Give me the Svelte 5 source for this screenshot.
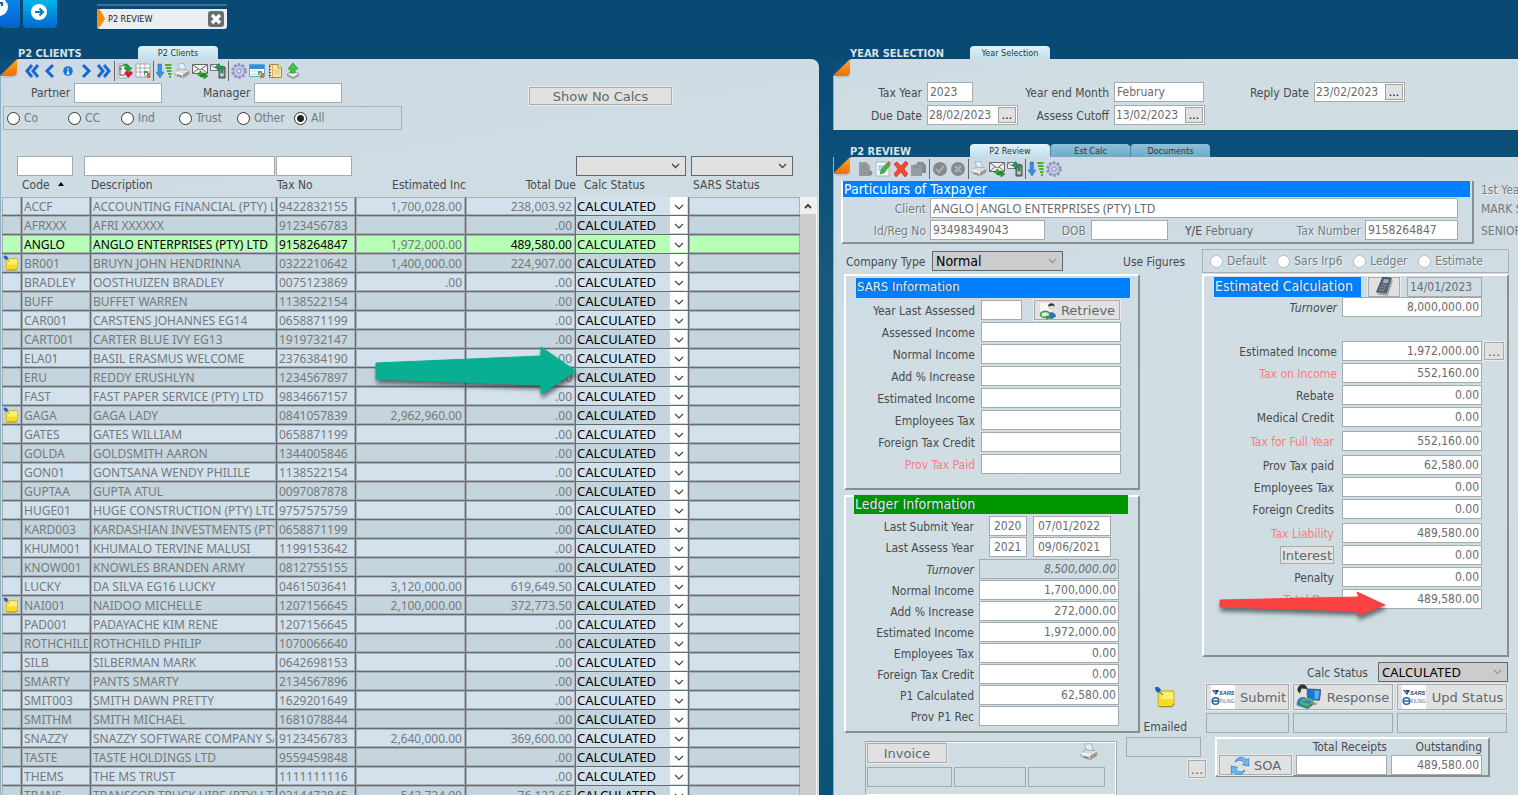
<script>
  const rows = [
    ['ACCF', 'ACCOUNTING FINANCIAL (PTY) LTD', '9422832155', '1,700,028.00', '238,003.92'],
    ['AFRXXX', 'AFRI XXXXXX', '9123456783', '', '.00'],
    ['ANGLO', 'ANGLO ENTERPRISES (PTY) LTD', '9158264847', '1,972,000.00', '489,580.00'],
    ['BR001', 'BRUYN JOHN HENDRINNA', '0322210642', '1,400,000.00', '224,907.00', true],
    ['BRADLEY', 'OOSTHUIZEN BRADLEY', '0075123869', '.00', '.00'],
    ['BUFF', 'BUFFET WARREN', '1138522154', '', '.00'],
    ['CAR001', 'CARSTENS JOHANNES EG14', '0658871199', '', '.00'],
    ['CART001', 'CARTER BLUE IVY EG13', '1919732147', '', '.00'],
    ['ELA01', 'BASIL ERASMUS WELCOME', '2376384190', '', '.00'],
    ['ERU', 'REDDY ERUSHLYN', '1234567897', '', '.00'],
    ['FAST', 'FAST PAPER SERVICE (PTY) LTD', '9834667157', '', '.00'],
    ['GAGA', 'GAGA LADY', '0841057839', '2,962,960.00', '.00', true],
    ['GATES', 'GATES WILLIAM', '0658871199', '', '.00'],
    ['GOLDA', 'GOLDSMITH AARON', '1344005846', '', '.00'],
    ['GON01', 'GONTSANA WENDY PHILILE', '1138522154', '', '.00'],
    ['GUPTAA', 'GUPTA ATUL', '0097087878', '', '.00'],
    ['HUGE01', 'HUGE CONSTRUCTION (PTY) LTD', '9757575759', '', '.00'],
    ['KARD003', 'KARDASHIAN INVESTMENTS (PTY)', '0658871199', '', '.00'],
    ['KHUM001', 'KHUMALO TERVINE MALUSI', '1199153642', '', '.00'],
    ['KNOW001', 'KNOWLES BRANDEN ARMY', '0812755155', '', '.00'],
    ['LUCKY', 'DA SILVA EG16 LUCKY', '0461503641', '3,120,000.00', '619,649.50'],
    ['NAI001', 'NAIDOO MICHELLE', '1207156645', '2,100,000.00', '372,773.50', true],
    ['PAD001', 'PADAYACHE KIM RENE', '1207156645', '', '.00'],
    ['ROTHCHILD', 'ROTHCHILD PHILIP', '1070066640', '', '.00'],
    ['SILB', 'SILBERMAN MARK', '0642698153', '', '.00'],
    ['SMARTY', 'PANTS SMARTY', '2134567896', '', '.00'],
    ['SMIT003', 'SMITH DAWN PRETTY', '1629201649', '', '.00'],
    ['SMITHM', 'SMITH MICHAEL', '1681078844', '', '.00'],
    ['SNAZZY', 'SNAZZY SOFTWARE COMPANY SA', '9123456783', '2,640,000.00', '369,600.00'],
    ['TASTE', 'TASTE HOLDINGS LTD', '9559459848', '', '.00'],
    ['THEMS', 'THE MS TRUST', '1111111116', '', '.00'],
    ['TRANS', 'TRANSCOR TRUCK HIRE (PTY) LTD', '9314472845', '542,724.00', '76,122.65'],
  ];
  const kinds = [['Co', 61], ['CC', 53], ['Ind', 58], ['Trust', 58], ['Other', 57], ['All', 50]];
  const sars = ['Assessed Income', 'Normal Income', 'Add % Increase', 'Estimated Income', 'Employees Tax', 'Foreign Tax Credit', 'Prov Tax Paid'];
  const ledger = [
    ['Normal Income', '1,700,000.00'],
    ['Add % Increase', '272,000.00'],
    ['Estimated Income', '1,972,000.00'],
    ['Employees Tax', '0.00'],
    ['Foreign Tax Credit', '0.00'],
    ['P1 Calculated', '62,580.00'],
    ['Prov P1 Rec', ''],
  ];
  const estimate = [
    ['Estimated Income', '1,972,000.00', 'wide'],
    ['Tax on Income', '552,160.00', 'wide red'],
    ['Rebate', '0.00', ''],
    ['Medical Credit', '0.00', ''],
    ['Tax for Full Year', '552,160.00', 'red apart'],
    ['Prov Tax paid', '62,580.00', 'apart'],
    ['Employees Tax', '0.00', ''],
    ['Foreign Credits', '0.00', ''],
    ['Tax Liability', '489,580.00', 'red apart'],
    ['Interest', '0.00', 'button'],
    ['Penalty', '0.00', ''],
    ['Total Due', '489,580.00', 'red'],
  ];
  const leftTools = ['first', 'prev', 'info', 'next', 'last', '|', 'export', 'grid', '|', 'sort', 'print', 'mail', 'phone', '|', 'gear', 'form', 'note', 'upload'];
  const rightTools = ['new', 'edit', 'delete', 'copy', '|', 'ok', 'cancel', '|', 'print', 'mail', 'phone', '|', 'sort', 'gear'];
</script>

{#snippet icon(name, size = 16)}
  <svg class="icon" width={size} height={size} viewBox="0 0 16 16" aria-hidden="true">
    {#if name === 'first'}
      <path d="M8 2 3 8l5 6M14 2 9 8l5 6" fill="none" stroke="#1768d2" stroke-width="3" />
    {:else if name === 'prev'}
      <path d="M11 2 5 8l6 6" fill="none" stroke="#1768d2" stroke-width="3" />
    {:else if name === 'info'}
      <circle cx="8" cy="8" r="4.8" fill="#1675dc" /><path d="M8 5v1.500M8 7.500v4M6.600 10.500h2.800" stroke="#fff" stroke-width="1.300" />
    {:else if name === 'next'}
      <path d="m5 2 6 6-6 6" fill="none" stroke="#1768d2" stroke-width="3" />
    {:else if name === 'last'}
      <path d="m2 2 5 6-5 6M8 2l5 6-5 6" fill="none" stroke="#1768d2" stroke-width="3" />
    {:else if name === 'export'}
      <path d="M1 1h9v14H1z" fill="#f3f3f3" stroke="#aaa" /><path d="M3 4v9M3 12h5" stroke="#888" stroke-width="1.500" /><path d="M2 3h3M2 6h3" stroke="#555" />
      <path d="M5 3c3-3 7-2 8 2h2l-4 4-4-4h2c-.5-2-2-3-4-2z" fill="#28a428" stroke="#116b15" stroke-width=".6" /><path d="M7.500 10c.5-2.500 3-2 4-.5 1-1.500 3.500-2 4 .5 0 2-2.500 2.500-4 5-1.500-2.500-4-3-4-5z" fill="#d51440" />
    {:else if name === 'grid'}
      <path d="M1 1h14v13H1z" fill="#fff" stroke="#a4a4ac" /><path d="M1 5h14M1 9h14M5 1v13M10 1v13" stroke="#aaa" />
      <path d="M9 8h4v4H9z" fill="#2ba84a" /><path d="M11 10h4v5h-3z" fill="#e85b43" /><path d="M10 10h2v2h-2z" fill="#fff" />
    {:else if name === 'sort'}
      <path d="M2 1h3.500v8H8l-4 6-4-6h2z" fill="#3c8ee0" stroke="#1c67b8" stroke-width=".5" />
      <path d="M9 2h6.500M10 5h5.500M11 8h4.500M12 11h3.500M13 14h2" stroke="#4fae2d" stroke-width="2" />
    {:else if name === 'print'}
      <path d="m4 1 6-.5L12 7 6 8z" fill="#dceeff" stroke="#90a9c5" stroke-width=".7" />
      <path d="m1 9 4-3 10 1v4l-6 4-8-3z" fill="#dcdcda" stroke="#9b9b9b" stroke-width=".7" /><path d="m1 9 8 2 6-4" fill="none" stroke="#fff" /><path d="m9 11 6-3.500v4L9 15z" fill="#9c9c9a" /><path d="m3 12 5 1.500" stroke="#666" />
    {:else if name === 'mail'}
      <path d="M.5 1.500h15v9H.5z" fill="#eef1ee" stroke="#666" /><path d="m1 2 7 5 7-5M1 10l5-4M15 10l-5-4" fill="none" stroke="#666" />
      <path d="m5 11 4-3v2h3v2H9v2z" fill="#38af35" stroke="#17681a" stroke-width=".6" /><path d="m16 13-4-3v2H9v2h3v2z" fill="#249b28" stroke="#17681a" stroke-width=".5" />
    {:else if name === 'phone'}
      <path d="M.5 1.500h9v6h-9z" fill="#f3f3f3" stroke="#777" /><path d="m1 2 4 3 4-3" fill="none" stroke="#777" />
      <path d="M9 4h6v11H9z" fill="#8a8d8c" stroke="#454848" /><path d="M10.500 7h3v6h-3z" fill="#cfd5d3" /><path d="m5 4 4-3.500V3h4v7h-2V5.500H9V8z" fill="#20a05a" stroke="#11683a" stroke-width=".5" />
    {:else if name === 'gear'}
      <circle cx="8" cy="8" r="6.500" fill="none" stroke="#8a8ec0" stroke-width="2.500" stroke-dasharray="2.500 1.600" /><circle cx="8" cy="8" r="5.500" fill="#c9cbe6" stroke="#8f93c2" /><circle cx="8" cy="8" r="2.200" fill="#e3e8f1" stroke="#8084b7" />
    {:else if name === 'form'}
      <path d="M.5 1.500h15v12H.5z" fill="#fff" stroke="#5aa5dc" /><path d="M1 2h14v4H1z" fill="#348de0" /><path d="M2 8h6M2 11h6" stroke="#a9cde8" /><path d="M9 8h4v4H9z" fill="#3bad4a" /><path d="M11 10h4v5h-4z" fill="#ed654a" /><path d="M10.500 10h1.500v1.500h-1.500z" fill="#fff" />
    {:else if name === 'note'}
      <path d="M2.500 1.500H11L14.500 5v9.500h-12z" fill="#fbeaa0" stroke="#a08640" /><path d="M11 1.500V5h3.500" fill="#fff" stroke="#a08640" /><path d="M5.500 2v12" stroke="#e8a070" /><path d="M7 7h6M7 9h6M7 11h6" stroke="#dcc984" /><path d="M2 3.500h2M2 6.500h2M2 9.500h2M2 12.500h2" stroke="#555" />
    {:else if name === 'upload'}
      <path d="m2 11 6-3 6 3-6 4z" fill="#eee" stroke="#888" stroke-width=".7" /><path d="m2 11 6 3v2l-6-3zm12 0-6 3v2l6-3z" fill="#999" /><path d="M8 0 3 6h3l-1 4h5V6h3z" fill="#43c53f" stroke="#1f8a24" stroke-width=".7" />
    {:else if name === 'new'}
      <path d="M2 1h7l4 4v10H2z" fill="#969b9e" /><path d="M4 6h6M4 9h6M4 12h5" stroke="#858a8d" /><circle cx="13" cy="12" r="2.500" fill="#8c9194" />
    {:else if name === 'edit'}
      <path d="M1 1h10l3 3v11H1z" fill="#f6fafc" stroke="#a3b3bd" /><path d="M3 5h7M3 7h7M3 9h4" stroke="#78a8cf" /><path d="m5 13 1-4 6-7 3 2-6 8z" fill="#45b542" stroke="#25822b" stroke-width=".6" /><path d="m12 2 1.500-2L16 2l-1 2z" fill="#df5a4a" />
    {:else if name === 'delete'}
      <path d="m1 3 3-2 4 4 5-5 2 3-4 5 4 5-3 3-4-5-5 5-2-3 4-5z" fill="#ef4a30" stroke="#c32413" stroke-width=".6" />
    {:else if name === 'copy'}
      <path d="M6 1h6l3 3v8H6z" fill="#858b8e" /><path d="M0 4h3l1-1h2l1 1h4v11H0z" fill="#959b9e" /><path d="M2 6h6" stroke="#7c8285" />
    {:else if name === 'ok'}
      <circle cx="8" cy="8" r="7" fill="#85898c" /><path d="m4 8 3 3 5-6" fill="none" stroke="#a8aeb1" stroke-width="2.200" />
    {:else if name === 'cancel'}
      <circle cx="8" cy="8" r="7" fill="#85898c" /><path d="m5 5 6 6M11 5l-6 6" stroke="#a8aeb1" stroke-width="2.400" />
    {:else if name === 'sticky'}
      <path d="M3 3.500h11.500V13l-2 2H3z" fill="#f7dc26" stroke="#c4a42a" stroke-width=".6" /><path d="M5 4.500h9v5H5z" fill="#fdf07a" /><path d="M4 15h9l2-2" fill="none" stroke="#a88b2c" stroke-width=".8" /><path d="m.5 1 2.500-.5 2 2-1 2.500-2.500-1z" fill="#1c5fc7" /><path d="m4 4 2.500 2.500" stroke="#7a8da5" />
    {:else if name === 'person'}
      <path d="M1 1h10v11H1z" fill="#f6f8fa" /><circle cx="11" cy="4.500" r="2.800" fill="#e5d6c8" /><path d="M8 4c0-4 6-4 6 0l-2-1z" fill="#29343a" />
      <path d="M7 14c0-7 8-6 8-1l-4 2z" fill="#2878ae" /><ellipse cx="5.500" cy="11" rx="4" ry="2.700" fill="#dfeee5" stroke="#3f9c4c" stroke-width="1.500" /><path d="m6 12 4 1-3 3z" fill="#348f42" />
    {:else if name === 'response'}
      <path d="m7 3 9 .5-1 6.500-7-.5z" fill="#1977d8" stroke="#4c5f70" stroke-width=".6" /><path d="m12 4 3 .3-.8 5-2-.2z" fill="#52b4f2" /><path d="m9 11 5 .5-1 1.500-5-.5z" fill="#9eaab0" />
      <path d="M1 13c0-5 4-6 7-4l4 3-4 3.500z" fill="#2f86a8" /><circle cx="4.500" cy="4.500" r="2.800" fill="#eadfd6" /><path d="M1.500 4c0-5 6-4.500 6-1L4 2.800 3 6z" fill="#29343a" />
      <ellipse cx="7.500" cy="11" rx="3.500" ry="1.700" fill="none" stroke="#5fb06c" stroke-width="1.400" /><path d="m9 12 2 .5-2 2z" fill="#348f42" />
    {:else if name === 'calc'}
      <path d="m7 0 7 1-4 12-8-1z" fill="#56616d" stroke="#39424a" stroke-width=".6" /><path d="m8 1.500 4 .5-1 3-4-.5z" fill="#91b5cf" /><path d="m6 6 4 1M5 8l4 1M4 10l4 1" stroke="#8fa6bb" stroke-dasharray="1 .6" /><path d="m14 1-4 12-8-1 1 2 8 1 4-12z" fill="#9aa1a5" />
    {:else if name === 'refresh'}
      <path d="M4 5c2-5 6-5 9-2l2-1v6l-5-1 1.500-1.500C9 2.500 6 3 4 5z" fill="#6bb8f5" stroke="#287bcb" stroke-width=".6" /><path d="M12 11c-2 5-6 5-9 2l-2 1V8l5 1-1.500 1.500C7 13.500 10 13 12 11z" fill="#6bb8f5" stroke="#287bcb" stroke-width=".6" />
    {:else if name === 'close'}
      <rect width="16" height="16" rx="3" fill="#686d70" /><path d="m4 4 8 8M12 4l-8 8" stroke="#fff" stroke-width="3.200" />
    {/if}
  </svg>
{/snippet}

{#snippet toolbar(tools)}
  <div class="toolbar">
    {#each tools as t}
      {#if t === '|'}<span class="sep"></span>{:else}<button class="tool" aria-label={t}>{@render icon(t)}</button>{/if}
    {/each}
  </div>
{/snippet}

{#snippet fold()}
  <svg class="fold" width="18" height="20" viewBox="0 0 18 20" aria-hidden="true">
    <defs><linearGradient id="og" x2="0" y2="1"><stop stop-color="#ffad25" /><stop offset="1" stop-color="#f26a00" /></linearGradient></defs>
    <path d="M0 0h18L0 17z" fill="#0b4f7b" /><path d="M3 18h9q5 0 5-4" fill="none" stroke="#aab4ba" /><path d="M0 17 17 0v12q0 5-5 5z" fill="url(#og)" />
  </svg>
{/snippet}

{#snippet logo()}
  <svg width="24" height="24" viewBox="0 0 24 24" aria-hidden="true">
    <path d="M0 0h24v24H0z" fill="#fff" /><path d="M1 5h7L5 10z" fill="#123f85" /><path d="m3 5 2 3" stroke="#fff" stroke-width=".7" />
    <text x="8" y="10" font-size="5.500" font-family="Liberation Sans" font-weight="bold" font-style="italic" fill="#174b8d">SARS</text>
    <circle cx="4.500" cy="16" r="3.300" fill="none" stroke="#1766ae" stroke-width="1.500" /><path d="M2 16h5" stroke="#1766ae" stroke-width="1.500" />
    <text x="9" y="18" font-size="4.500" font-family="Liberation Sans" fill="#667">FILING</text>
  </svg>
{/snippet}

<div class="app">
  <header>
    <button class="tile cut" aria-label="Back"><svg width="20" height="28" aria-hidden="true"><circle cx="-1" cy="7" r="9" fill="#fff" /><path d="M-3 3h5v3" fill="none" stroke="#0864c5" stroke-width="2" /></svg></button>
    <button class="tile" aria-label="Forward"><svg width="34" height="28" aria-hidden="true"><circle cx="16" cy="12" r="8" fill="#fff" /><path d="M12 12h8M16.500 8.500 20 12l-3.500 3.500" fill="none" stroke="#0878c8" stroke-width="2" /></svg></button>
    <div class="doc">
      <svg width="9" height="20" viewBox="0 0 9 20" aria-hidden="true"><path d="M0 0h2q3 3 6 10-3 6-8 10z" fill="#f88b0c" /></svg>
      <span>P2 REVIEW</span>
      <button class="tool" aria-label="Close">{@render icon('close')}</button>
    </div>
  </header>

  <main>
    <section class="clients">
      <div class="head"><h2>P2 CLIENTS</h2><nav><a class="tab on" href="#clients">P2 Clients</a></nav></div>
      <div class="panel rounded">
        {@render fold()}
        {@render toolbar(leftTools)}
        <div class="search">
          <label for="partner">Partner</label><input id="partner" />
          <label for="manager">Manager</label><input id="manager" />
          <button class="btn calcs">Show No Calcs</button>
        </div>
        <div class="kinds">
          {#each kinds as [k, w]}
            <label style="width:{w}px"><input type="radio" name="kind" checked={k === 'All'} />{k}</label>
          {/each}
        </div>
        <div class="filters">
          <input class="f1" aria-label="Code filter" /><input class="f2" aria-label="Description filter" /><input class="f3" aria-label="Tax No filter" />
          <select class="s1" aria-label="Calc Status filter"><option></option></select><select class="s2" aria-label="SARS Status filter"><option></option></select>
        </div>
        <div class="list">
          <table>
            <colgroup><col class="c0" /><col class="c1" /><col class="c2" /><col class="c3" /><col class="c4" /><col class="c5" /><col class="c6" /><col /></colgroup>
            <thead>
              <tr><th></th><th>Code <svg class="asc" width="6" height="4" aria-hidden="true"><path d="M0 4 3 0l3 4z" /></svg></th><th>Description</th><th>Tax No</th><th class="num">Estimated Inc</th><th class="num">Total Due</th><th class="calc">Calc Status</th><th class="last">SARS Status</th></tr>
            </thead>
            <tbody>
              {#each rows as [code, desc, tax, inc, due, note], i}
                <tr class:on={i === 2}>
                  <td class="flag">{#if note}{@render icon('sticky')}{/if}</td>
                  <td><div class="cell">{code}</div></td><td><div class="cell">{desc}</div></td><td>{tax}</td><td class="num inc">{inc}</td><td class="num">{due}</td>
                  <td class="pick"><select aria-label="Calc Status {code}"><option>CALCULATED</option></select></td>
                  <td></td>
                </tr>
              {/each}
            </tbody>
          </table>
          <div class="scroll"><button aria-label="Scroll up"><svg width="8" height="6" aria-hidden="true"><path d="m1 5 3-3 3 3" fill="none" stroke="#444" stroke-width="2" /></svg></button></div>
        </div>
      </div>
    </section>

    <section class="review">
      <div class="head"><h2>YEAR SELECTION</h2><nav><a class="tab on" href="#year">Year Selection</a></nav></div>
      <div class="panel year">
        {@render fold()}
        <label for="ty">Tax Year</label><input id="ty" class="short" value="2023" />
        <label for="ym">Year end Month</label><input id="ym" value="February" />
        <label for="rd">Reply Date</label><span class="date"><input id="rd" value="23/02/2023" /><button aria-label="Pick reply date">...</button></span>
        <label for="dd">Due Date</label><span class="date"><input id="dd" value="28/02/2023" /><button aria-label="Pick due date">...</button></span>
        <label for="ac">Assess Cutoff</label><span class="date"><input id="ac" value="13/02/2023" /><button aria-label="Pick cutoff">...</button></span>
      </div>

      <div class="head second"><h2>P2 REVIEW</h2><nav><a class="tab on" href="#review">P2 Review</a><a class="tab" href="#calc">Est Calc</a><a class="tab" href="#docs">Documents</a></nav></div>
      <div class="panel body">
        {@render fold()}
        {@render toolbar(rightTools)}
        <div class="who">
          <div class="raised particulars">
            <h3 class="flat">Particulars of Taxpayer</h3>
            <div class="line"><label class="dim first" for="cl">Client</label><input id="cl" class="grow caps" value="ANGLO|ANGLO ENTERPRISES (PTY) LTD" /></div>
            <div class="line">
              <label class="dim first" for="id">Id/Reg No</label><input id="id" class="idno" value="93498349043" />
              <label class="dim dob" for="dob">DOB</label><input id="dob" class="dobi" />
              <span class="ye">Y/E <i>February</i></span>
              <label class="dim taxl" for="tn">Tax Number</label><input id="tn" class="grow" value="9158264847" />
            </div>
          </div>
          <div class="staff"><span class="dim">1st Year</span><span>MARK SMITH</span><span>SENIOR</span></div>
        </div>
        <div class="company">
          <label for="ct">Company Type</label>
          <select id="ct" class="dark"><option>Normal</option></select>
          <span class="use">Use Figures</span>
          <div class="figures">
            {#each ['Default', 'Sars Irp6', 'Ledger', 'Estimate'] as f}<label class="dim"><input type="radio" name="fig" disabled />{f}</label>{/each}
          </div>
        </div>

        <div class="columns">
          <div class="left">
            <div class="raised sars">
              <h3>SARS Information</h3>
              <div class="rows">
                <div class="field"><label for="yl">Year Last Assessed</label><input id="yl" class="yr" /><button class="btn retrieve">{@render icon('person', 18)}Retrieve</button></div>
                {#each sars as s, i}
                  <div class="field" class:red={i === 6}><label for="s{i}">{s}</label><input id="s{i}" /></div>
                {/each}
              </div>
            </div>
            <div class="raised ledger">
              <h3 class="big">Ledger Information</h3>
              <div class="rows">
                <div class="field"><label for="lsy">Last Submit Year</label><input id="lsy" class="yy" value="2020" /><input class="dt" aria-label="Last submit date" value="07/01/2022" /></div>
                <div class="field"><label for="lay">Last Assess Year</label><input id="lay" class="yy" value="2021" /><input class="dt" aria-label="Last assess date" value="09/06/2021" /></div>
                <div class="field it"><label for="lt">Turnover</label><input id="lt" class="num ghost" value="8,500,000.00" /></div>
                {#each ledger as [l, v], i}
                  <div class="field"><label for="l{i}">{l}</label><input id="l{i}" class="num" value={v} /></div>
                {/each}
              </div>
            </div>
            <div class="invoice">
              <div class="bar"><button class="btn">Invoice</button><button class="tool" aria-label="Print invoice">{@render icon('print', 18)}</button></div>
              <div class="trio"><input class="ghost" aria-label="Invoice number" /><input class="ghost" aria-label="Invoice date" /><input class="ghost" aria-label="Invoice amount" /></div>
            </div>
          </div>

          <div class="mid">
            <div class="mailed">{@render icon('sticky', 22)}<label for="em">Emailed</label></div>
            <input id="em" class="ghost" />
            <button class="btn dots">...</button>
          </div>

          <div class="right">
            <div class="raised est">
              <div class="top"><h3 class="big">Estimated Calculation</h3><button class="btn" aria-label="Calculate">{@render icon('calc', 20)}</button><input class="ghost" aria-label="Calculation date" value="14/01/2023" /></div>
              <div class="field it"><label for="et">Turnover</label><input id="et" class="num" value="8,000,000.00" /></div>
              <div class="rows">
                {#each estimate as [l, v, c], i}
                  <div class="field {c}">
                    {#if c === 'button'}<span class="lab"><button class="btn" id="e{i}b">{l}</button></span><input aria-labelledby="e{i}b" class="num" value={v} />
                    {:else}<label for="e{i}">{l}</label><input id="e{i}" class="num" value={v} />{/if}
                    {#if i === 0}<button class="btn more">...</button>{/if}
                  </div>
                {/each}
              </div>
            </div>
            <div class="status"><label for="cs">Calc Status</label><select id="cs" class="dark"><option>CALCULATED</option></select></div>
            <div class="actions">
              <button class="btn">{@render logo()}<span>Submit</span></button>
              <button class="btn">{@render icon('response', 26)}<span>Response</span></button>
              <button class="btn">{@render logo()}<span>Upd Status</span></button>
              <input class="ghost" aria-label="Submitted" /><input class="ghost" aria-label="Responded" /><input class="ghost" aria-label="Updated" />
            </div>
            <div class="raised totals">
              <span></span><label for="tr">Total Receipts</label><label for="os">Outstanding</label>
              <button class="btn">{@render icon('refresh', 20)}SOA</button><input id="tr" class="num" /><input id="os" class="num" value="489,580.00" />
            </div>
          </div>
        </div>
      </div>
    </section>
  </main>

  <svg class="arrow green" width="206" height="54" viewBox="0 0 206 54" aria-hidden="true"><path d="m2 17 165-7V1l35 24-35 23v-9L2 33z" fill="#08af92" stroke="#08af92" stroke-linejoin="round" /></svg>
  <svg class="arrow crimson" width="172" height="32" viewBox="0 0 172 32" aria-hidden="true"><path d="m2 10 139-3-2-5 28 13-28 11 2-5-139-4z" fill="#fb4242" stroke="#fb4242" stroke-linejoin="round" /></svg>
</div>

<style>
  :global(body) { background: #0b4f7b; }
  .app { position: relative; height: 100vh; min-height: 500px; overflow: hidden; display: flex; flex-direction: column;
    background: linear-gradient(180deg, #084872 0, #0a4d79 16%, #16597a 35%, #145b80 60%, #0a5375 100%);
    font: 12px/16px "DejaVu Sans Condensed", "Noto Sans", sans-serif; color: #484b4d; }
  .app * { box-sizing: border-box; }
  input, select, button { font: inherit; color: inherit; margin: 0; border-radius: 0; }
  input:not([type='radio']) { height: 20px; min-width: 0; border: 1px solid #a4abb0; background: #fff; color: #696b6d; padding: 0 2px; }
  input:not([type='radio']).ghost { background: transparent; }
  input.num { text-align: right; }
  input[type='radio'] { appearance: none; width: 13px; height: 13px; border: 1px solid #333; border-radius: 50%; background: #fff; flex: none; }
  input[type='radio']:checked { background: radial-gradient(circle, #222 0 3px, #fff 4px); }
  input[type='radio']:disabled { border-color: #b6bcc0; }
  .caps, td, select { font-family: "Noto Sans", sans-serif; }
  button { padding: 0; border: 0; background: none; }
  .icon, svg { display: block; flex: none; }
  .num { text-align: right; }
  .btn { display: flex; align-items: center; justify-content: center; height: 20px; border: 1px solid #aaa; outline: 1px solid #e8ecee; outline-offset: 0; background: #e1e1e1; color: #5c6870; padding-top: 2px; font: 13px/16px "DejaVu Sans", sans-serif; white-space: nowrap; }
  select { appearance: none; height: 20px; border: 1px solid #5f686e; padding: 0 18px 0 3px; color: #000; font-size: 13px;
    background: #e1e1e1 url("data:image/svg+xml,%3Csvg xmlns='http://www.w3.org/2000/svg' width='9' height='6'%3E%3Cpath d='m1 1 3.500 3.500L8 1' fill='none' stroke='%23444' stroke-width='1.300'/%3E%3C/svg%3E") no-repeat right 5px center; }
  select.dark { background-color: #ccc; background-image: url("data:image/svg+xml,%3Csvg xmlns='http://www.w3.org/2000/svg' width='9' height='6'%3E%3Cpath d='m1 1 3.500 3.500L8 1' fill='none' stroke='%23999' stroke-width='1.300'/%3E%3C/svg%3E"); }
  .dim { color: #777b7e; text-shadow: 1px 1px #eef3f5; }
  .red label { color: #f87c80; }

  header { display: flex; height: 40px; flex: none; }
  .tile { width: 34px; height: 28px; margin-right: 3px; border-radius: 0 0 4px 4px; background: linear-gradient(#00b5ea, #0068d0); }
  .tile.cut { width: 20px; background: linear-gradient(#0c83ec, #0461cf); overflow: hidden; }
  .doc { width: 130px; height: 25px; margin: 4px 0 0 37px; border-top: 2px solid #3d719d; box-sizing: border-box; padding-top: 3px; display: grid; grid-template-columns: 9px 1fr 19px; align-items: center; font-size: 9px; color: #222;
    background: linear-gradient(transparent 3px, #e9eef2 3px); border-radius: 0 0 3px 3px; }
  .doc span { padding-left: 2px; }

  main { flex: 1; min-height: 0; display: grid; grid-template-columns: minmax(700px, 819fr) minmax(0, 685fr); gap: 14px; }
  section { display: flex; flex-direction: column; min-height: 0; min-width: 0; }
  .head { height: 19px; flex: none; display: flex; align-items: flex-end; padding-left: 18px; }
  .head.second { height: 27px; }
  h2 { margin: 0; width: 120px; font: bold 11px/11px "DejaVu Sans Condensed", sans-serif; color: #d5e2ea; white-space: nowrap; }
  .review .head { padding-left: 17px; }
  nav { display: flex; }
  .tab { width: 80px; height: 13px; border-radius: 4px 4px 0 0; text-align: center; font-size: 9px; line-height: 15px; color: #333; text-decoration: none; background: linear-gradient(#8fc0d8, #6fa9c8); }
  .tab.on { background: linear-gradient(#e2f2f8, #bfe0ee); }
  .tab + .tab { border-left: 1px solid #4d88aa; }
  .panel { position: relative; background: linear-gradient(170deg, #cddae3, #d0dee3 40%, #cfdde3); border-left: 1px solid #8fb0c4; }
  .rounded { border-radius: 0 8px 0 0; flex: 1; min-height: 0; display: flex; flex-direction: column; }
  .fold { position: absolute; left: -1px; top: 0; }
  .toolbar { display: flex; gap: 2px; align-items: center; height: 24px; padding-left: 23px; flex: none; }
  .tool { width: 16px; height: 16px; }
  .sep { width: 1px; height: 20px; background: #666; }

  .search { display: flex; align-items: center; height: 20px; padding-left: 30px; flex: none; }
  .search label { width: 43px; }
  .search label:nth-of-type(2) { width: 51px; margin-left: 41px; }
  .search input { width: 88px; }
  .calcs { width: 143px; height: 18px; margin: 0 0 -2px 187px; align-self: flex-end; }
  .kinds { display: flex; align-items: center; width: 399px; height: 24px; margin: 3px 0 0 2px; padding-left: 3px; border: 1px solid #abb1b6; color: #74797c; flex: none; }
  .kinds label, .figures label { display: flex; align-items: center; gap: 4px; white-space: nowrap; }
  .kinds label { flex: none; }
  .filters { display: flex; padding: 26px 0 0 16px; flex: none; }
  .f1 { width: 56px; margin-right: 11px; }
  .f2 { width: 191px; margin-right: 1px; }
  .f3 { width: 76px; margin-right: 224px; }
  .s1 { width: 110px; margin-right: 5px; }
  .s2 { width: 102px; }
  .list { display: flex; flex: 1; min-height: 0; overflow: hidden; padding: 0 2px 0 1px; align-items: flex-start; }
  table { flex: 1; table-layout: fixed; border-collapse: separate; border-spacing: 0; width: 100px; }
  .c0 { width: 20px; } .c1 { width: 69px; } .c2 { width: 186px; } .c3 { width: 79px; } .c4 { width: 110px; } .c5 { width: 110px; } .c6 { width: 113px; }
  th { height: 21px; padding: 0 0 4px; font-weight: normal; text-align: left; white-space: nowrap; }
  th.calc { padding-left: 8px; } th.last { padding-left: 4px; }
  .asc { display: inline-block; margin: 0 0 3px 5px; }
  td { height: 19px; padding: 2px 2px 0; overflow: hidden; white-space: nowrap; line-height: 16px; color: #74797c; background: #d3e1ec; border-right: 1px solid #646c72; border-bottom: 1px solid #646c72; box-shadow: inset 0 0 0 1px #a9b1b7; }
  .cell { overflow: hidden; height: 16px; }
  td:last-child { border-right: 0; }
  tr:nth-child(even) td { background: #c5d5dd; }
  tbody tr.on td { background: #b7ffb4; color: #000; }
  tbody tr.on td.inc { color: #74797c; }
  td.flag { padding: 0 1px; }
  td.num { padding-right: 3px; }
  td.pick { padding: 0; box-shadow: none; }
  .pick select { display: block; width: 100%; height: 18px; border: 0; padding: 0 18px 0 1px; background-color: transparent; background-image: url("data:image/svg+xml,%3Csvg xmlns='http://www.w3.org/2000/svg' width='17' height='17'%3E%3Cpath fill='%23fff' d='M0 0h17v17H0z'/%3E%3Cpath d='m5 8 4 4 4-4' fill='none' stroke='%23444' stroke-width='1.200'/%3E%3C/svg%3E"); background-position: right 1px top; }
  .scroll { align-self: stretch; width: 17px; margin-top: 21px; border-right: 1px solid #f0f3f5; background: #cdcdcd; flex: none; }
  .scroll button { width: 16px; height: 17px; background: #f0f0f0; display: grid; place-items: center; }

  .year { height: 71px; flex: none; display: grid; grid-template-columns: 88px 91px 86px 90px 100px 91px; column-gap: 5px; row-gap: 3px; grid-auto-rows: 20px; padding-top: 23px; align-items: center; justify-content: start; }
  .year label { text-align: right; white-space: nowrap; padding-top: 1px; }
  .year .short { width: 46px; }
  .date { display: flex; width: 91px; height: 20px; border: 1px solid #a4abb0; background: #fff; }
  .date input:not([type='radio']) { border: 0; width: 70px; height: 18px; padding: 0 1px; }
  .date button { width: 18px; height: 16px; margin: 1px 0; background: #e1e1e1; border: 1px solid #a0a0a0; color: #000; line-height: 12px; }

  .body { flex: 1; min-height: 0; overflow: hidden; }
  .raised { border: 2px solid; border-color: #fff #8a8e91 #8a8e91 #fff; }
  h3 { margin: 0; padding-left: 1px; height: 20px; font: 13px/18px "DejaVu Sans Condensed", sans-serif; color: #dce9f6; text-shadow: -1px 0 #45617c; background: #0080ff; white-space: nowrap; }
  h3.flat { height: 16px; line-height: 17px; margin-right: 2px; color: #fff; text-shadow: none; font-size: 14px; }
  h3.big { font-size: 14px; }
  .who { display: flex; margin-left: 7px; }
  .particulars { width: 633px; height: 63px; border-top-width: 0; flex: none; }
  .line { display: flex; align-items: center; padding-right: 14px; margin: 1px 0 2px; white-space: nowrap; }
  .line label { text-align: right; padding: 1px 4px 0 0; }
  .line .first { width: 87px; flex: none; }
  .grow { flex: 1; }
  .idno { width: 115px; } .line .dob { width: 46px; padding-right: 5px; } .dobi { width: 77px; }
  .ye { width: 76px; margin-left: 17px; padding-top: 1px; } .ye i { font-style: normal; color: #6d7173; }
  .line .taxl { width: 104px; }
  .staff { padding-left: 7px; white-space: nowrap; color: #74797c; display: grid; grid-template-rows: 17px 22px 22px; align-items: center; }
  .company { display: flex; align-items: center; height: 24px; margin: 5px 0 1px 12px; white-space: nowrap; }
  .company > label, .use { padding-top: 2px; }
  .company > label { width: 86px; }
  .company select { width: 131px; flex: none; font: 14px/16px "DejaVu Sans Condensed", sans-serif; }
  .use { width: 139px; padding-left: 60px; flex: none; }
  .figures { display: flex; align-items: center; justify-content: space-between; width: 307px; height: 24px; flex: none; border: 1px solid #abb1b6; padding: 0 25px 0 7px; }

  .columns { display: grid; grid-template-columns: 296px 62px 307px; margin-left: 10px; align-items: start; }
  .field { display: flex; align-items: center; height: 20px; }
  .field label, .lab { width: 129px; flex: none; text-align: right; margin-right: 6px; white-space: nowrap; }
  .field label { padding-top: 2px; }
  .field input { width: 140px; }
  .field .yr { width: 41px; margin-right: 12px; }
  .retrieve { width: 86px; gap: 4px; }
  .rows { display: grid; row-gap: 2px; }
  .sars { padding: 2px 0 14px; }
  .sars h3 { margin: 0 8px 2px 10px; }
  .ledger { margin-top: 5px; padding-bottom: 5px; }
  .ledger h3 { margin: -2px 10px 2px 8px; height: 19px; background: #009600; text-shadow: -1px 0 #2d522d; }
  .ledger .rows { row-gap: 1px; }
  .ledger .it { margin-top: 1px; }
  .ledger .field label { width: 128px; margin-right: 5px; }
  .ledger .field .yy { width: 38px; margin: 0 6px 0 10px; padding-left: 4px; }
  .ledger .field .dt { width: 78px; padding-left: 4px; }
  .it label, .it .ghost { font-style: italic; }
  .invoice { width: 251px; height: 54px; margin: 8px 0 0 21px; border: 1px solid #9fa5a9; border-right-color: #fff; border-bottom-color: #fff; box-shadow: 1px 0 #a5abaf, inset 0 1px #fff; padding: 1px 9px 0 1px; }
  .bar { display: flex; justify-content: space-between; padding-right: 10px; margin-bottom: 4px; }
  .bar .btn { width: 80px; }
  .trio { display: grid; grid-template-columns: 85px 72px 77px; gap: 2px; }

  .mid { display: flex; flex-direction: column; align-items: flex-end; padding: 412px 1px 0 0; }
  .mailed { display: flex; flex-direction: column; align-items: center; gap: 11px; margin-right: 14px; }
  .mid input { width: 75px; flex: none; margin: 2px 0 3px; }
  .dots { width: 18px; height: 18px; margin-right: -5px; }

  .est { padding-bottom: 46px; }
  .est .top { display: grid; grid-template-columns: 147px 32px 75px; column-gap: 7px; padding-left: 10px; height: 21px; align-items: end; }
  .est .top .btn { padding: 0; }
  .est .rows { margin-top: 24px; }
  .est .field label, .lab { width: 130px; margin-right: 8px; }
  .est .it label, .est .wide label { width: 133px; margin-right: 5px; }
  .est .apart { margin-top: 2px; }
  .est .field input { flex: none; }
  .lab { display: flex; justify-content: flex-end; }
  .lab .btn { height: 18px; padding: 2px 1px 0; outline: 0; }
  .more { width: 20px; height: 18px; margin-left: 2px; flex: none; }
  .status { display: flex; justify-content: flex-end; align-items: center; gap: 10px; margin: 5px 1px 2px 0; }
  .status label { padding-top: 2px; }
  .status select { width: 130px; }
  .actions { display: grid; grid-template-columns: 83px 100px 110px; column-gap: 4px; row-gap: 3px; margin-left: 4px; }
  .actions .btn { height: 26px; gap: 3px; justify-content: flex-start; padding: 0 0 0 4px; }
  .actions .btn:nth-child(2) { padding-left: 1px; }
  .actions .btn span { flex: 1; text-align: center; padding-top: 2px; }
  .totals { width: 275px; margin: 4px 0 0 13px; display: grid; grid-template-columns: 73px 91px 91px; column-gap: 4px; padding-left: 2px; }
  .totals label { text-align: right; }
  .totals .btn { gap: 4px; }

  .arrow { position: absolute; filter: drop-shadow(1px 4px 2px rgb(40 50 55 / 65%)); }
  .green { left: 374px; top: 346px; }
  .crimson { left: 1218px; top: 590px; }
</style>
